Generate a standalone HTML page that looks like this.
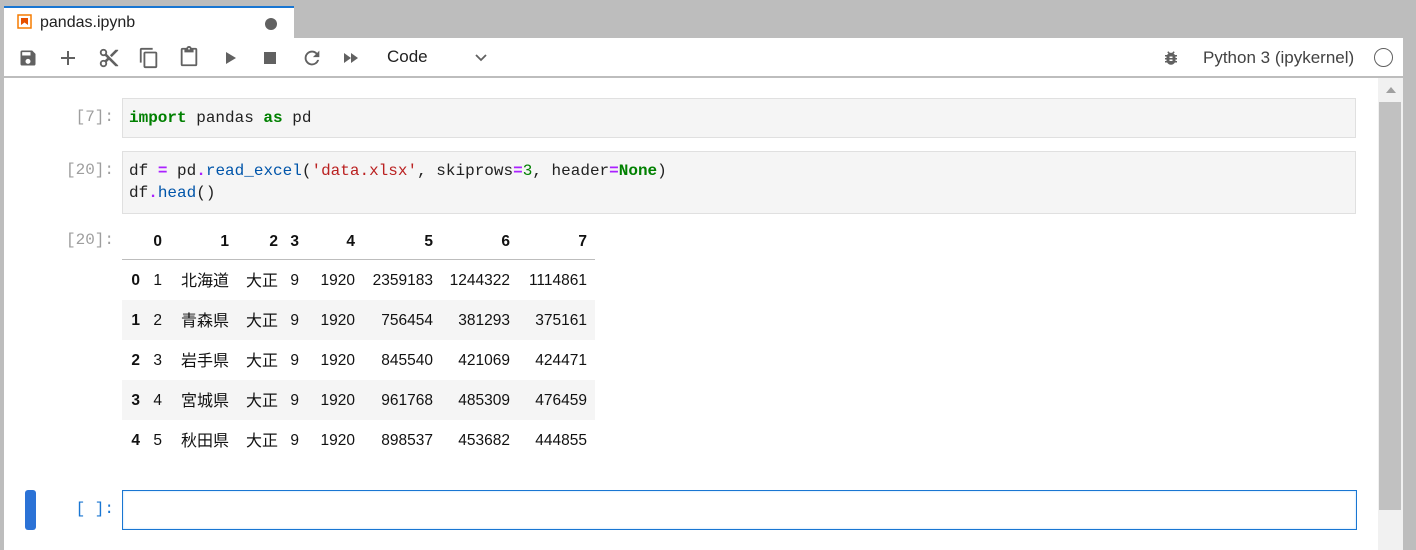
<!DOCTYPE html>
<html><head><meta charset="utf-8"><style>
body{margin:0;width:1416px;height:550px;background:#bdbdbd;position:relative;overflow:hidden;font-family:"Liberation Sans","Noto Sans CJK JP",sans-serif}
.abs{position:absolute}
.tab{left:4px;top:6px;width:290px;height:32px;background:#fff;border-top:2px solid #1976d2;box-sizing:border-box}
.tb{left:4px;top:38px;width:1399px;height:39px;background:#fff;border-bottom:1px solid #bdbdbd;box-sizing:border-box}
.main{left:4px;top:78px;width:1374px;height:472px;background:#fff}
.sb{left:1378px;top:78px;width:25px;height:472px;background:#f1f1f1}
.mono{font-family:"Liberation Mono","DejaVu Sans Mono",monospace;font-size:16px}
.prompt{color:#9e9e9e;text-align:right;width:110px;left:4px}
.cell{left:122px;width:1234px;background:#f5f5f5;border:1px solid #e0e0e0;box-sizing:border-box;padding:8px 6px;line-height:22px;color:#212121}
.k{color:#008000;font-weight:bold}.o{color:#aa22ff;font-weight:bold}.s{color:#ba2121}.f{color:#0055aa}.n{color:#008000}
table{border-collapse:collapse;font-size:15.5px;color:#111;font-family:"Liberation Sans","Noto Sans CJK JP",sans-serif}
td,th{text-align:right;padding:2px 8px 0 0;height:38px;white-space:nowrap;line-height:20px}
th{font-weight:bold}
.j span{font-size:16px;position:relative;top:1px;line-height:16px;display:inline-block}
thead th{height:35px;border-bottom:1px solid #bdbdbd}
tbody tr:nth-child(odd){background:#fff}
tbody tr:nth-child(even){background:#f5f5f5}
</style></head><body>
<div class="abs tab">
<svg class="abs" style="left:13px;top:6px" width="15" height="15"><rect x="1" y="1" width="13" height="13" fill="none" stroke="#f57c00" stroke-width="1.5"/><path d="M4 4h7v7l-3.5-2.5L4 11z" fill="#e65100"/></svg>
<div class="abs" style="left:36px;top:6px;font-size:16px;color:#212121">pandas.ipynb</div>
<div class="abs" style="left:261px;top:10px;width:12px;height:12px;border-radius:50%;background:#616161"></div>
</div>
<div class="abs tb"></div>
<svg class="abs" style="left:18px;top:48px" width="20" height="20" viewBox="0 0 24 24"><path d="M17 3H5a2 2 0 0 0-2 2v14a2 2 0 0 0 2 2h14a2 2 0 0 0 2-2V7zm-5 16a3 3 0 1 1 0-6 3 3 0 0 1 0 6zm3-10H5V5h10z" fill="#616161"/></svg>
<svg class="abs" style="left:58px;top:48px" width="20" height="20"><path d="M10 3v14M3 10h14" stroke="#616161" stroke-width="2"/></svg>
<svg class="abs" style="left:98px;top:47px" width="22" height="22" viewBox="0 0 24 24"><path d="M9.64 7.64c.23-.5.36-1.05.36-1.64 0-2.21-1.79-4-4-4S2 3.79 2 6s1.79 4 4 4c.59 0 1.14-.13 1.64-.36L10 12l-2.36 2.36C7.14 14.13 6.59 14 6 14c-2.21 0-4 1.79-4 4s1.79 4 4 4 4-1.79 4-4c0-.59-.13-1.14-.36-1.64L12 14l7 7h3v-1zM6 8a2 2 0 1 1 0-4 2 2 0 0 1 0 4zm0 12a2 2 0 1 1 0-4 2 2 0 0 1 0 4zm13-17l-6 6 2 2 7-7V3z" fill="#616161"/></svg>
<svg class="abs" style="left:138px;top:47px" width="22" height="22" viewBox="0 0 24 24"><path d="M16 1H4a2 2 0 0 0-2 2v14h2V3h12zm3 4H8a2 2 0 0 0-2 2v14a2 2 0 0 0 2 2h11a2 2 0 0 0 2-2V7a2 2 0 0 0-2-2zm0 16H8V7h11z" fill="#616161"/></svg>
<svg class="abs" style="left:178px;top:46px" width="22" height="22" viewBox="0 0 24 24"><path d="M19 2h-4.18C14.4.84 13.3 0 12 0S9.6.84 9.18 2H5a2 2 0 0 0-2 2v16a2 2 0 0 0 2 2h14a2 2 0 0 0 2-2V4a2 2 0 0 0-2-2zm-7 0a1 1 0 1 1 0 2 1 1 0 0 1 0-2zm7 18H5V4h2v3h10V4h2z" fill="#616161"/></svg>
<svg class="abs" style="left:224px;top:51px" width="14" height="14"><path d="M2 1l10 6-10 6z" fill="#616161"/></svg>
<div class="abs" style="left:264px;top:52px;width:12px;height:12px;background:#616161"></div>
<svg class="abs" style="left:301px;top:47px" width="22" height="22" viewBox="0 0 24 24"><path d="M17.65 6.35A7.96 7.96 0 0 0 12 4a8 8 0 1 0 7.73 10h-2.08A6 6 0 1 1 12 6c1.66 0 3.14.69 4.22 1.78L13 11h7V4z" fill="#616161"/></svg>
<svg class="abs" style="left:343px;top:51px" width="16" height="14"><path d="M1 2l7 5-7 5zM8 2l7 5-7 5z" fill="#616161"/></svg>
<div class="abs" style="left:387px;top:47px;font-size:17px;color:#212121">Code</div>
<svg class="abs" style="left:474px;top:53px" width="14" height="10"><path d="M2 2l5 5 5-5" stroke="#616161" stroke-width="1.8" fill="none"/></svg>
<svg class="abs" style="left:1162px;top:48px" width="18" height="20" viewBox="0 0 24 24"><path d="M20 8h-2.81a5.985 5.985 0 0 0-1.82-1.96L17 4.41 15.59 3l-2.17 2.17a6.002 6.002 0 0 0-2.83 0L8.41 3 7 4.41l1.62 1.63C7.88 6.55 7.26 7.22 6.81 8H4v2h2.09c-.05.33-.09.66-.09 1v1H4v2h2v1c0 .34.04.67.09 1H4v2h2.81c1.04 1.79 2.97 3 5.19 3s4.15-1.21 5.19-3H20v-2h-2.09c.05-.33.09-.66.09-1v-1h2v-2h-2v-1c0-.34-.04-.67-.09-1H20zm-6 8h-4v-2h4zm0-4h-4v-2h4z" fill="#616161"/></svg>
<div class="abs" style="left:1203px;top:48px;font-size:17px;color:#424242">Python 3 (ipykernel)</div>
<div class="abs" style="left:1374px;top:48px;width:19px;height:19px;border:1.6px solid #616161;border-radius:50%;box-sizing:border-box"></div>
<div class="abs main"></div>
<div class="abs sb"><svg class="abs" style="left:7px;top:8px" width="12" height="8"><path d="M1 7l5-6 5 6z" fill="#a0a0a0"/></svg><div class="abs" style="left:1px;top:24px;width:22px;height:408px;background:#c1c1c1"></div></div>
<div class="abs mono prompt" style="top:108px">[7]:</div>
<div class="abs cell mono" style="top:98px;height:40px"><span class="k">import</span> pandas <span class="k">as</span> pd</div>
<div class="abs mono prompt" style="top:161px">[20]:</div>
<div class="abs cell mono" style="top:151px;height:63px">df <span class="o">=</span> pd<span class="o">.</span><span class="f">read_excel</span>(<span class="s">'data.xlsx'</span>, skiprows<span class="o">=</span><span class="n">3</span>, header<span class="o">=</span><span class="k">None</span>)<br>df<span class="o">.</span><span class="f">head</span>()</div>
<div class="abs mono prompt" style="top:231px">[20]:</div>
<table class="abs" style="left:122px;top:222px">
<colgroup><col style="width:26px"><col style="width:22px"><col style="width:67px"><col style="width:49px"><col style="width:21px"><col style="width:56px"><col style="width:78px"><col style="width:77px"><col style="width:77px"></colgroup>
<thead><tr><th></th><th>0</th><th>1</th><th>2</th><th>3</th><th>4</th><th>5</th><th>6</th><th>7</th></tr></thead>
<tbody>
<tr><th>0</th><td>1</td><td class="j"><span>北海道</span></td><td class="j"><span>大正</span></td><td>9</td><td>1920</td><td>2359183</td><td>1244322</td><td>1114861</td></tr>
<tr><th>1</th><td>2</td><td class="j"><span>青森県</span></td><td class="j"><span>大正</span></td><td>9</td><td>1920</td><td>756454</td><td>381293</td><td>375161</td></tr>
<tr><th>2</th><td>3</td><td class="j"><span>岩手県</span></td><td class="j"><span>大正</span></td><td>9</td><td>1920</td><td>845540</td><td>421069</td><td>424471</td></tr>
<tr><th>3</th><td>4</td><td class="j"><span>宮城県</span></td><td class="j"><span>大正</span></td><td>9</td><td>1920</td><td>961768</td><td>485309</td><td>476459</td></tr>
<tr><th>4</th><td>5</td><td class="j"><span>秋田県</span></td><td class="j"><span>大正</span></td><td>9</td><td>1920</td><td>898537</td><td>453682</td><td>444855</td></tr>
</tbody></table>
<div class="abs" style="left:25px;top:490px;width:11px;height:40px;background:#2b72d6;border-radius:3px"></div>
<div class="abs mono prompt" style="top:500px;color:#1976d2">[ ]:</div>
<div class="abs" style="left:122px;top:490px;width:1235px;height:40px;border:1px solid #1976d2;box-sizing:border-box;box-shadow:inset 0 0 2px #bbdefb"></div>
</body></html>
